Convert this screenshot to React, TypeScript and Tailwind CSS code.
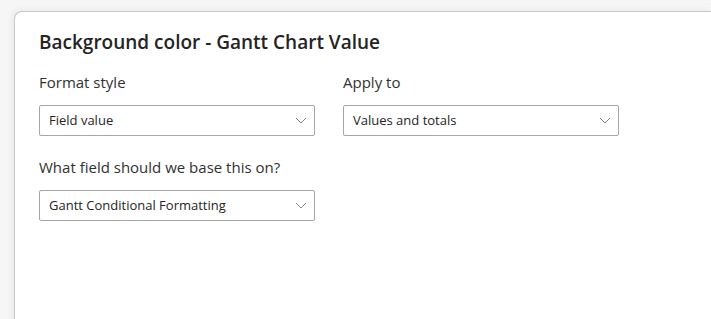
function Chevron() {
  return (
    <svg width="12" height="7" viewBox="0 0 12 7" fill="none" className="text-[#797775]">
      <path d="M1 1l5 5 5-5" stroke="currentColor" strokeWidth="0.9" />
    </svg>
  );
}

function Dropdown({ value }: { value: string }) {
  return (
    <div className="flex items-center justify-between w-[276px] h-[31px] pl-[9px] pr-[7px] bg-white border border-[#a6a6a6] rounded-[2px]">
      <span className="text-[13px] text-[#252423] leading-none">{value}</span>
      <Chevron />
    </div>
  );
}

function Field({ label, value }: { label: string; value: string }) {
  return (
    <div className="flex flex-col">
      <div className="text-[15px] text-[#323130] leading-[20px] mb-[13px]">{label}</div>
      <Dropdown value={value} />
    </div>
  );
}

export default function App() {
  return (
    <div
      className="w-[711px] h-[319px] overflow-hidden bg-[#f6f6f6] pt-[11px] pl-[14px]"
      style={{ fontFamily: '"Open Sans", "Noto Sans", sans-serif' }}
    >
      <div className="h-[320px] bg-white border-t border-l border-[#c8c8c8] rounded-tl-[8px] shadow-[-2px_-1px_6px_rgba(0,0,0,0.06)] pl-[24px] pt-[18px]">
        <h1 className="text-[19px] font-semibold text-[#252423] leading-[24px]">
          Background color - Gantt Chart Value
        </h1>
        <div className="mt-[18px] flex gap-[28px]">
          <Field label="Format style" value="Field value" />
          <Field label="Apply to" value="Values and totals" />
        </div>
        <div className="mt-[21px]">
          <Field label="What field should we base this on?" value="Gantt Conditional Formatting" />
        </div>
      </div>
    </div>
  );
}
